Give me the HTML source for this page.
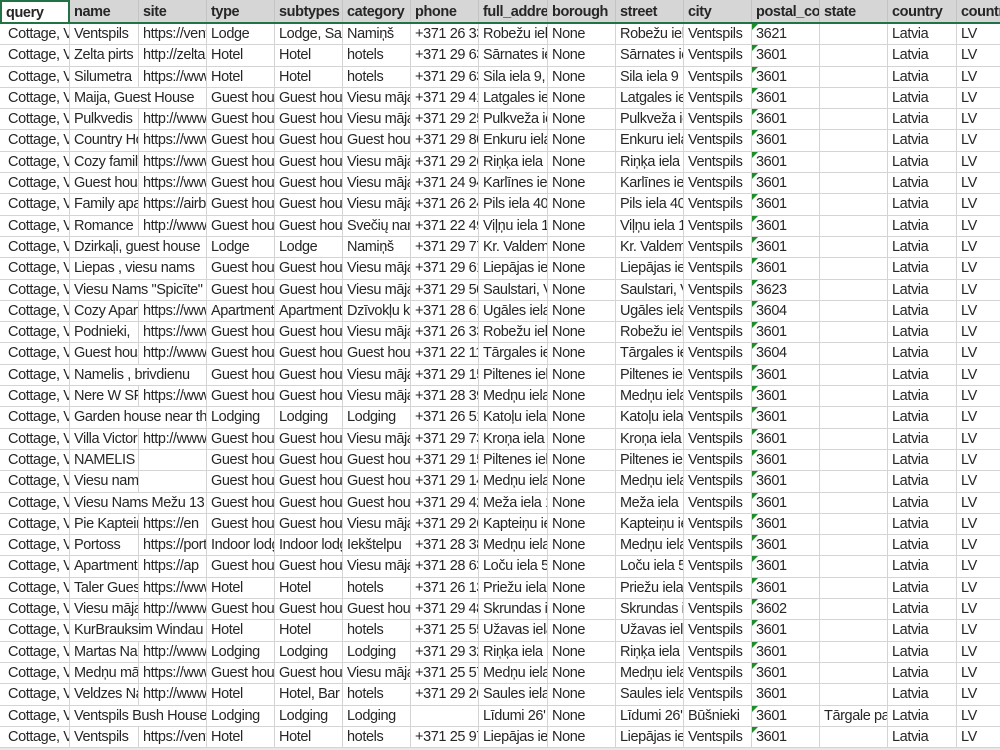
<!DOCTYPE html>
<html><head><meta charset="utf-8"><style>
body{margin:0;width:1000px;height:750px;overflow:hidden;background:#e8e8e8;font-family:"Liberation Sans",Arial,sans-serif;font-size:14.5px;color:#262626;letter-spacing:-0.4px}
.t{position:absolute;left:0;top:0;width:1000px;background:#fff}
.r{display:flex;height:21.3px;box-sizing:border-box}
c{display:block;flex:none;box-sizing:border-box;height:21.3px;line-height:21px;padding-left:4px;white-space:nowrap;overflow:hidden;border-right:1px solid #d4d4d4;border-bottom:1px solid #d4d4d4;position:relative}
c:first-child{padding-left:8px}
.h{height:24px;background:#d9d9d9;border-bottom:2px solid #217346}
.h c{height:22px;line-height:24px;font-weight:bold;border-bottom:none;border-right:1px solid #c4c4c4;background:#d6d6d6}
.h c:first-child{background:#fff;border:2px solid #217346;border-bottom:none;line-height:22px;padding-left:4px}
c:nth-child(1){width:70px}c:nth-child(2){width:69px}c:nth-child(3){width:68px}c:nth-child(4){width:68px}c:nth-child(5){width:68px}c:nth-child(6){width:68px}c:nth-child(7){width:68px}c:nth-child(8){width:69px}c:nth-child(9){width:68px}c:nth-child(10){width:68px}c:nth-child(11){width:68px}c:nth-child(12){width:68px}c:nth-child(13){width:68px}c:nth-child(14){width:69px}c:nth-child(15){width:60px;border-right:none}
.r c.w{width:137px}
.r c.z{display:none}
.p::before{content:"";position:absolute;left:0;top:0;border-top:6px solid #1e8c2a;border-right:6px solid transparent}
</style></head><body><div class="t">
<div class="r h"><c>query</c><c>name</c><c>site</c><c>type</c><c>subtypes</c><c>category</c><c>phone</c><c>full_address</c><c>borough</c><c>street</c><c>city</c><c>postal_code</c><c>state</c><c>country</c><c>country_code</c></div>
<div class="r"><c>Cottage, Ventspils</c><c>Ventspils</c><c>https://ventspils</c><c>Lodge</c><c>Lodge, Sauna</c><c>Namiņš</c><c>+371 26 33</c><c>Robežu iela</c><c>None</c><c>Robežu iela</c><c>Ventspils</c><c class="p">3621</c><c></c><c>Latvia</c><c>LV</c></div>
<div class="r"><c>Cottage, Ventspils</c><c>Zelta pirts</c><c>http://zelta</c><c>Hotel</c><c>Hotel</c><c>hotels</c><c>+371 29 63</c><c>Sārnates iela</c><c>None</c><c>Sārnates iela</c><c>Ventspils</c><c class="p">3601</c><c></c><c>Latvia</c><c>LV</c></div>
<div class="r"><c>Cottage, Ventspils</c><c>Silumetra</c><c>https://www</c><c>Hotel</c><c>Hotel</c><c>hotels</c><c>+371 29 63</c><c>Sila iela 9, V</c><c>None</c><c>Sila iela 9</c><c>Ventspils</c><c class="p">3601</c><c></c><c>Latvia</c><c>LV</c></div>
<div class="r"><c>Cottage, Ventspils</c><c class="w">Maija, Guest House</c><c class="z"></c><c>Guest house</c><c>Guest house</c><c>Viesu māja</c><c>+371 29 41</c><c>Latgales iela</c><c>None</c><c>Latgales iela</c><c>Ventspils</c><c class="p">3601</c><c></c><c>Latvia</c><c>LV</c></div>
<div class="r"><c>Cottage, Ventspils</c><c>Pulkvedis</c><c>http://www</c><c>Guest house</c><c>Guest house</c><c>Viesu māja</c><c>+371 29 25</c><c>Pulkveža iela</c><c>None</c><c>Pulkveža iela</c><c>Ventspils</c><c class="p">3601</c><c></c><c>Latvia</c><c>LV</c></div>
<div class="r"><c>Cottage, Ventspils</c><c>Country House</c><c>https://www</c><c>Guest house</c><c>Guest house</c><c>Guest house</c><c>+371 29 80</c><c>Enkuru iela</c><c>None</c><c>Enkuru iela</c><c>Ventspils</c><c class="p">3601</c><c></c><c>Latvia</c><c>LV</c></div>
<div class="r"><c>Cottage, Ventspils</c><c>Cozy family</c><c>https://www</c><c>Guest house</c><c>Guest house</c><c>Viesu māja</c><c>+371 29 26</c><c>Riņķa iela 1</c><c>None</c><c>Riņķa iela 1</c><c>Ventspils</c><c class="p">3601</c><c></c><c>Latvia</c><c>LV</c></div>
<div class="r"><c>Cottage, Ventspils</c><c>Guest house</c><c>https://www</c><c>Guest house</c><c>Guest house</c><c>Viesu māja</c><c>+371 24 94</c><c>Karlīnes iela</c><c>None</c><c>Karlīnes iela</c><c>Ventspils</c><c class="p">3601</c><c></c><c>Latvia</c><c>LV</c></div>
<div class="r"><c>Cottage, Ventspils</c><c>Family apartment</c><c>https://airbnb</c><c>Guest house</c><c>Guest house</c><c>Viesu māja</c><c>+371 26 24</c><c>Pils iela 40, V</c><c>None</c><c>Pils iela 40</c><c>Ventspils</c><c class="p">3601</c><c></c><c>Latvia</c><c>LV</c></div>
<div class="r"><c>Cottage, Ventspils</c><c>Romance</c><c>http://www</c><c>Guest house</c><c>Guest house</c><c>Svečių namai</c><c>+371 22 49</c><c>Viļņu iela 1</c><c>None</c><c>Viļņu iela 1</c><c>Ventspils</c><c class="p">3601</c><c></c><c>Latvia</c><c>LV</c></div>
<div class="r"><c>Cottage, Ventspils</c><c class="w">Dzirkaļi, guest house</c><c class="z"></c><c>Lodge</c><c>Lodge</c><c>Namiņš</c><c>+371 29 77</c><c>Kr. Valdemāra</c><c>None</c><c>Kr. Valdemāra</c><c>Ventspils</c><c class="p">3601</c><c></c><c>Latvia</c><c>LV</c></div>
<div class="r"><c>Cottage, Ventspils</c><c class="w">Liepas , viesu nams</c><c class="z"></c><c>Guest house</c><c>Guest house</c><c>Viesu māja</c><c>+371 29 61</c><c>Liepājas iela</c><c>None</c><c>Liepājas iela</c><c>Ventspils</c><c class="p">3601</c><c></c><c>Latvia</c><c>LV</c></div>
<div class="r"><c>Cottage, Ventspils</c><c class="w">Viesu Nams "Spicīte"</c><c class="z"></c><c>Guest house</c><c>Guest house</c><c>Viesu māja</c><c>+371 29 50</c><c>Saulstari, Ve</c><c>None</c><c>Saulstari, Ve</c><c>Ventspils</c><c class="p">3623</c><c></c><c>Latvia</c><c>LV</c></div>
<div class="r"><c>Cottage, Ventspils</c><c>Cozy Apartment</c><c>https://www</c><c>Apartment</c><c>Apartment</c><c>Dzīvokļu kompl</c><c>+371 28 61</c><c>Ugāles iela</c><c>None</c><c>Ugāles iela</c><c>Ventspils</c><c class="p">3604</c><c></c><c>Latvia</c><c>LV</c></div>
<div class="r"><c>Cottage, Ventspils</c><c>Podnieki, </c><c>https://www</c><c>Guest house</c><c>Guest house</c><c>Viesu māja</c><c>+371 26 33</c><c>Robežu iela</c><c>None</c><c>Robežu iela</c><c>Ventspils</c><c class="p">3601</c><c></c><c>Latvia</c><c>LV</c></div>
<div class="r"><c>Cottage, Ventspils</c><c>Guest house</c><c>http://www</c><c>Guest house</c><c>Guest house</c><c>Guest house</c><c>+371 22 11</c><c>Tārgales iela</c><c>None</c><c>Tārgales iela</c><c>Ventspils</c><c class="p">3604</c><c></c><c>Latvia</c><c>LV</c></div>
<div class="r"><c>Cottage, Ventspils</c><c class="w">Namelis , brivdienu</c><c class="z"></c><c>Guest house</c><c>Guest house</c><c>Viesu māja</c><c>+371 29 15</c><c>Piltenes iela</c><c>None</c><c>Piltenes iela</c><c>Ventspils</c><c class="p">3601</c><c></c><c>Latvia</c><c>LV</c></div>
<div class="r"><c>Cottage, Ventspils</c><c>Nere W SPA</c><c>https://www</c><c>Guest house</c><c>Guest house</c><c>Viesu māja</c><c>+371 28 39</c><c>Medņu iela</c><c>None</c><c>Medņu iela</c><c>Ventspils</c><c class="p">3601</c><c></c><c>Latvia</c><c>LV</c></div>
<div class="r"><c>Cottage, Ventspils</c><c class="w">Garden house near the</c><c class="z"></c><c>Lodging</c><c>Lodging</c><c>Lodging</c><c>+371 26 51</c><c>Katoļu iela 1</c><c>None</c><c>Katoļu iela 1</c><c>Ventspils</c><c class="p">3601</c><c></c><c>Latvia</c><c>LV</c></div>
<div class="r"><c>Cottage, Ventspils</c><c>Villa Victoria</c><c>http://www</c><c>Guest house</c><c>Guest house</c><c>Viesu māja</c><c>+371 29 73</c><c>Kroņa iela 1</c><c>None</c><c>Kroņa iela 1</c><c>Ventspils</c><c class="p">3601</c><c></c><c>Latvia</c><c>LV</c></div>
<div class="r"><c>Cottage, Ventspils</c><c>NAMELIS</c><c></c><c>Guest house</c><c>Guest house</c><c>Guest house</c><c>+371 29 15</c><c>Piltenes iela</c><c>None</c><c>Piltenes iela</c><c>Ventspils</c><c class="p">3601</c><c></c><c>Latvia</c><c>LV</c></div>
<div class="r"><c>Cottage, Ventspils</c><c>Viesu nams</c><c></c><c>Guest house</c><c>Guest house</c><c>Guest house</c><c>+371 29 14</c><c>Medņu iela</c><c>None</c><c>Medņu iela</c><c>Ventspils</c><c class="p">3601</c><c></c><c>Latvia</c><c>LV</c></div>
<div class="r"><c>Cottage, Ventspils</c><c class="w">Viesu Nams Mežu 13</c><c class="z"></c><c>Guest house</c><c>Guest house</c><c>Guest house</c><c>+371 29 42</c><c>Meža iela 13</c><c>None</c><c>Meža iela 13</c><c>Ventspils</c><c class="p">3601</c><c></c><c>Latvia</c><c>LV</c></div>
<div class="r"><c>Cottage, Ventspils</c><c>Pie Kapteiņa</c><c>https://en</c><c>Guest house</c><c>Guest house</c><c>Viesu māja</c><c>+371 29 26</c><c>Kapteiņu iela</c><c>None</c><c>Kapteiņu iela</c><c>Ventspils</c><c class="p">3601</c><c></c><c>Latvia</c><c>LV</c></div>
<div class="r"><c>Cottage, Ventspils</c><c>Portoss</c><c>https://portoss</c><c>Indoor lodging</c><c>Indoor lodging</c><c>Iekštelpu</c><c>+371 28 38</c><c>Medņu iela</c><c>None</c><c>Medņu iela</c><c>Ventspils</c><c class="p">3601</c><c></c><c>Latvia</c><c>LV</c></div>
<div class="r"><c>Cottage, Ventspils</c><c>Apartment</c><c>https://ap</c><c>Guest house</c><c>Guest house</c><c>Viesu māja</c><c>+371 28 63</c><c>Loču iela 5</c><c>None</c><c>Loču iela 5</c><c>Ventspils</c><c class="p">3601</c><c></c><c>Latvia</c><c>LV</c></div>
<div class="r"><c>Cottage, Ventspils</c><c>Taler Guest</c><c>https://www</c><c>Hotel</c><c>Hotel</c><c>hotels</c><c>+371 26 13</c><c>Priežu iela 1</c><c>None</c><c>Priežu iela 1</c><c>Ventspils</c><c class="p">3601</c><c></c><c>Latvia</c><c>LV</c></div>
<div class="r"><c>Cottage, Ventspils</c><c>Viesu māja</c><c>http://www</c><c>Guest house</c><c>Guest house</c><c>Guest house</c><c>+371 29 48</c><c>Skrundas iela</c><c>None</c><c>Skrundas iela</c><c>Ventspils</c><c class="p">3602</c><c></c><c>Latvia</c><c>LV</c></div>
<div class="r"><c>Cottage, Ventspils</c><c class="w">KurBrauksim Windau</c><c class="z"></c><c>Hotel</c><c>Hotel</c><c>hotels</c><c>+371 25 55</c><c>Užavas iela</c><c>None</c><c>Užavas iela</c><c>Ventspils</c><c class="p">3601</c><c></c><c>Latvia</c><c>LV</c></div>
<div class="r"><c>Cottage, Ventspils</c><c>Martas Nams</c><c>http://www</c><c>Lodging</c><c>Lodging</c><c>Lodging</c><c>+371 29 32</c><c>Riņķa iela 1</c><c>None</c><c>Riņķa iela 1</c><c>Ventspils</c><c class="p">3601</c><c></c><c>Latvia</c><c>LV</c></div>
<div class="r"><c>Cottage, Ventspils</c><c>Medņu māja</c><c>https://www</c><c>Guest house</c><c>Guest house</c><c>Viesu māja</c><c>+371 25 57</c><c>Medņu iela</c><c>None</c><c>Medņu iela</c><c>Ventspils</c><c class="p">3601</c><c></c><c>Latvia</c><c>LV</c></div>
<div class="r"><c>Cottage, Ventspils</c><c>Veldzes Nams</c><c>http://www</c><c>Hotel</c><c>Hotel, Bar</c><c>hotels</c><c>+371 29 26</c><c>Saules iela 1</c><c>None</c><c>Saules iela 1</c><c>Ventspils</c><c>3601</c><c></c><c>Latvia</c><c>LV</c></div>
<div class="r"><c>Cottage, Ventspils</c><c class="w">Ventspils Bush House</c><c class="z"></c><c>Lodging</c><c>Lodging</c><c>Lodging</c><c></c><c>Līdumi 26'</c><c>None</c><c>Līdumi 26'</c><c>Būšnieki</c><c class="p">3601</c><c>Tārgale pagasts</c><c>Latvia</c><c>LV</c></div>
<div class="r"><c>Cottage, Ventspils</c><c>Ventspils </c><c>https://ventspils</c><c>Hotel</c><c>Hotel</c><c>hotels</c><c>+371 25 97</c><c>Liepājas iela</c><c>None</c><c>Liepājas iela</c><c>Ventspils</c><c class="p">3601</c><c></c><c>Latvia</c><c>LV</c></div>
</div></body></html>
